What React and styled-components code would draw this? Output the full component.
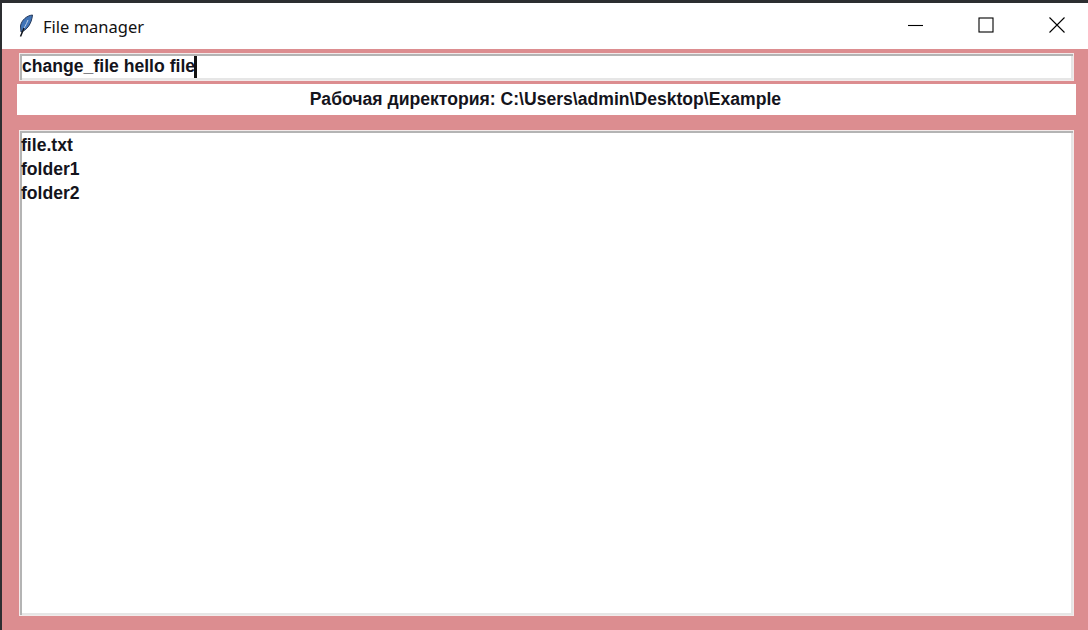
import React from "react";
import styled, { createGlobalStyle, css } from "styled-components";

const Global = createGlobalStyle`
  html, body { margin: 0; padding: 0; width: 1088px; height: 630px; overflow: hidden; background: #2c2e31; }
  * { box-sizing: border-box; }
`;
const sunken = css`
  border: 1px solid #f3eaea;
  box-shadow: inset 2px 2px 0 #b4b4b4, inset -2px -2px 0 #e6e6e6;
`;
const Desktop = styled.div`
  width: 1088px; height: 630px; padding: 3px 0 0 2px; background: #2c2e31;
  display: flex; flex-direction: column;
`;
const TitleBar = styled.header`
  height: 46px; background: #fff; display: flex; align-items: center; flex: none;
  font-family: "Noto Sans", "Open Sans", sans-serif; font-size: 16.5px; color: #111;
`;
const AppIcon = styled.svg`
  width: 16px; height: 24px; margin-left: 16px; margin-right: 9px; flex: none;
`;
const Title = styled.span` flex: 1; margin-top: 1px; `;
const WinButton = styled.button`
  width: 71px; height: 46px; border: 0; background: none; padding: 0;
  display: flex; align-items: center; justify-content: center;
`;
const Controls = styled.div` display: flex; margin: -2px -4px 0 0; `;
const Body = styled.main`
  flex: 1; min-height: 0; background: #dc8d90; display: flex; flex-direction: column;
  padding: 4px 12px 14px 15px;
  font-family: "Liberation Sans", Arial, sans-serif; font-weight: 700; font-size: 17.6px; color: #14141c;
`;
const Entry = styled.div`
  ${sunken}
  height: 28px; margin: 0 2px; background: #fff; flex: none;
  display: flex; align-items: center; padding: 0 0 1px 2px;
`;
const Caret = styled.span`
  display: inline-block; width: 3px; height: 22px; background: #111; margin-left: -1px;
`;
const Label = styled.div`
  height: 31px; margin-top: 3px; background: #fff; flex: none;
  display: flex; align-items: center; justify-content: center;
  line-height: 1; padding: 1px 2px 0 0;
`;
const ListBox = styled.ul`
  ${sunken}
  list-style: none; margin: 15px 2px 0; padding: 2px 0 0 1px; flex: 1; min-height: 0; background: #fff;
`;
const Row = styled.li`
  height: 24px; line-height: 24px;
`;

const glyph = { stroke: "#000", strokeWidth: 1.1, fill: "none" };

export default function App() {
  return (
    <Desktop>
      <Global />
      <TitleBar>
        <AppIcon viewBox="0 0 16 24">
          <path d="M14.5 1 C9 1.5 3.5 6 2.5 12 L3 18 C9 16 13.5 10 14.5 1 Z" fill="#3f74b8" stroke="#26395a" strokeWidth="1" />
          <path d="M10 6 C8 11 6 14 4.5 17" stroke="#b9cce6" strokeWidth="1" fill="none" />
          <path d="M6 14 L2.5 22.5" stroke="#10141c" strokeWidth="1.5" fill="none" />
        </AppIcon>
        <Title>File manager</Title>
        <Controls>
          <WinButton aria-label="minimize">
            <svg width="16" height="16" viewBox="0 0 16 16"><path d="M1 8.5H16" {...glyph} /></svg>
          </WinButton>
          <WinButton aria-label="maximize">
            <svg width="16" height="16" viewBox="0 0 16 16"><rect x="1" y="1" width="14" height="14" {...glyph} /></svg>
          </WinButton>
          <WinButton aria-label="close">
            <svg width="16" height="16" viewBox="0 0 16 16"><path d="M.5.5 15.5 15.5M15.5.5.5 15.5" {...glyph} /></svg>
          </WinButton>
        </Controls>
      </TitleBar>
      <Body>
        <Entry>change_file hello file<Caret /></Entry>
        <Label>Рабочая директория: C:\Users\admin\Desktop\Example</Label>
        <ListBox>
          <Row>file.txt</Row>
          <Row>folder1</Row>
          <Row>folder2</Row>
        </ListBox>
      </Body>
    </Desktop>
  );
}
